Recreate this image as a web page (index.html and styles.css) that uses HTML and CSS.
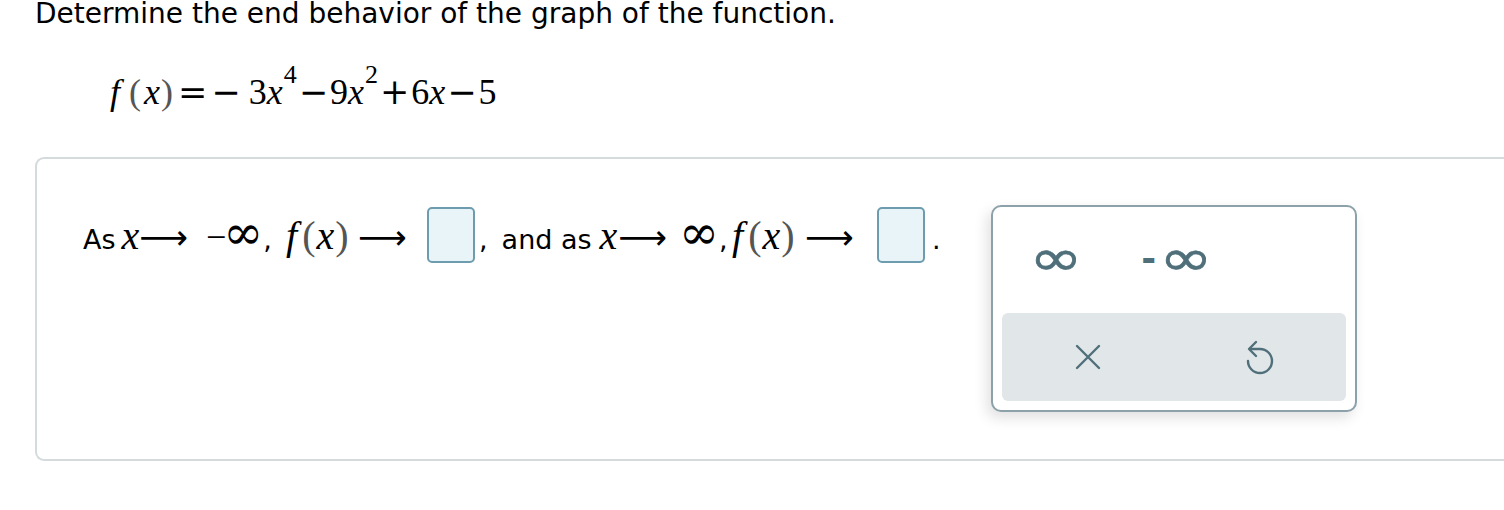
FILE: index.html
```html
<!DOCTYPE html>
<html lang="en">
<head>
<meta charset="utf-8">
<title>End behavior</title>
<link rel="stylesheet" href="styles.css">
</head>
<body>
<main class="page">
  <p class="prompt">Determine the end behavior of the graph of the function.</p>
  <div class="formula">
    <span class="mi f">f</span><span class="paren lp">(</span><span class="mi">x</span><span class="paren rp">)</span><span class="mo eq">=</span><span class="mo neg">−</span><span class="mn">3</span><span class="mi">x</span><sup class="sup">4</sup><span class="mo">−</span><span class="mn">9</span><span class="mi">x</span><sup class="sup">2</sup><span class="mo">+</span><span class="mn">6</span><span class="mi">x</span><span class="mo">−</span><span class="mn">5</span>
  </div>
  <section class="panel">
    <div class="answer-row">
      <span class="seg seg-a"><span class="txt">As</span><span class="mi rx">x</span><span class="arrow">⟶</span></span>
      <span class="seg seg-b"><span class="minus">−</span><span class="inf">∞</span><span class="txt">,</span></span>
      <span class="seg seg-c"><span class="mi rf">f</span><span class="paren rlp">(</span><span class="mi">x</span><span class="paren rrp">)</span></span>
      <span class="seg seg-d"><span class="arrow">⟶</span></span>
      <span class="blank"></span>
      <span class="seg seg-e"><span class="txt comma2">,</span><span class="txt">and as</span><span class="mi rx2">x</span><span class="arrow">⟶</span></span>
      <span class="seg seg-f"><span class="inf">∞</span><span class="txt">,</span></span>
      <span class="seg seg-g"><span class="mi rf">f</span><span class="paren rlp">(</span><span class="mi">x</span><span class="paren rrp">)</span></span>
      <span class="seg seg-h"><span class="arrow">⟶</span></span>
      <span class="blank"></span>
      <span class="txt period">.</span>
    </div>
    <div class="palette">
      <div class="keys">
        <button class="key"><span class="sym">∞</span></button>
        <button class="key"><span class="dash">-</span><span class="sym">∞</span></button>
      </div>
      <div class="tools">
        <button class="tool" aria-label="Clear">
          <svg width="26" height="26" viewBox="0 0 26 26"><path d="M2 2 L24 24 M24 2 L2 24" stroke="#4f6f7a" stroke-width="2.4" stroke-linecap="round" fill="none"/></svg>
        </button>
        <button class="tool" aria-label="Undo">
          <svg width="34" height="38" viewBox="0 0 34 38"><path d="M5 23 A12 12 0 1 0 17 11 H7" stroke="#4f6f7a" stroke-width="2.4" stroke-linecap="round" fill="none"/><path d="M13 4 L6 11 L13 18" stroke="#4f6f7a" stroke-width="2.4" stroke-linecap="round" stroke-linejoin="round" fill="none"/></svg>
        </button>
      </div>
    </div>
  </section>
</main>
</body>
</html>
```

FILE: styles.css
```css
html, body {
  margin: 0;
  padding: 0;
  background: #ffffff;
  overflow: hidden;
}

body {
  font-family: "DejaVu Sans", Verdana, sans-serif;
  color: #000;
}

.page {
  width: 1504px;
  height: 510px;
}

.prompt {
  margin: 0;
  padding: 0 0 0 35px;
  font-size: 28px;
  line-height: 28px;
}

/* ---------- formula ---------- */
.formula {
  margin-top: 44px;
  padding-left: 110px;
  font-family: "Liberation Serif", "Times New Roman", serif;
  font-size: 36px;
  line-height: 40px;
  height: 40px;
  white-space: nowrap;
}

.mi {
  font-family: "Liberation Serif", "Times New Roman", serif;
  font-style: italic;
}

.formula .f { margin-right: 9px; }

.paren {
  font-family: "Liberation Serif", serif;
  color: #555;
}

.formula .lp { margin-right: 3px; }
.formula .rp { margin-left: 1px; }

.mo {
  font-family: "DejaVu Serif", serif;
  font-size: 35px;
  margin: 0 2px;
}

.formula .eq { margin-left: 5px; margin-right: 4px; }
.formula .neg { margin-left: 0; margin-right: 8px; }

.sup {
  font-size: 26px;
  vertical-align: 21px;
  line-height: 0;
  margin-left: 1px;
}

/* ---------- panel ---------- */
.panel {
  box-sizing: border-box;
  margin: 45px 0 0 35px;
  width: 1500px;
  height: 304px;
  border: 2px solid #d5dadd;
  border-right: none;
  border-radius: 9px 0 0 9px;
  display: flex;
  align-items: flex-start;
  padding: 48px 0 0 46px;
}

.answer-row {
  display: flex;
  align-items: baseline;
  width: 908px;
  flex: none;
  white-space: nowrap;
  margin-top: -3px;
}

.answer-row span {
  line-height: 56px;
}

.seg {
  display: flex;
  align-items: baseline;
  flex: none;
}

.seg-a { width: 122px; }
.seg-b { width: 81px; padding-left: 1px; box-sizing: border-box; }
.seg-c { width: 72px; }
.seg-d { width: 69px; }
.seg-e { width: 204px; }
.seg-f { width: 53px; }
.seg-g { width: 73px; }
.seg-h { width: 72px; }

.txt {
  font-family: "DejaVu Sans", Verdana, sans-serif;
  font-size: 27px;
}

.answer-row .mi,
.answer-row .paren {
  font-size: 40px;
}

.rx { margin-left: 6px; margin-right: 0; }
.rx2 { margin-left: 8px; margin-right: 1px; }

.arrow {
  font-family: "DejaVu Sans", sans-serif;
  font-size: 34px;
}

.minus {
  font-family: "Liberation Serif", serif;
  font-size: 36px;
  margin-right: -3px;
}

.inf {
  font-family: "DejaVu Serif", serif;
  font-size: 48px;
}

.rf { margin-right: 5px; }
.rlp { margin-right: 1px; }
.rrp { margin-left: 1px; }

.blank {
  box-sizing: border-box;
  align-self: flex-start;
  flex: none;
  width: 48px;
  height: 56px;
  margin-top: 3px;
  border: 2px solid #6c9cad;
  border-radius: 5px;
  background: #e8f4f8;
}

.comma2 { margin-left: 4px; margin-right: 14px; }

.period { margin-left: 7px; }

/* ---------- palette ---------- */
.palette {
  box-sizing: border-box;
  flex: none;
  width: 366px;
  height: 207px;
  margin-top: -2px;
  border: 2px solid #8ca1aa;
  border-radius: 10px;
  background: #fff;
  box-shadow: -4px 6px 14px rgba(0, 0, 0, 0.12);
  display: flex;
  flex-direction: column;
  padding: 0 9px 9px 9px;
}

.keys {
  display: flex;
  height: 106px;
  margin-left: -5px;
}

.key {
  width: 118px;
  height: 106px;
  border: 0;
  background: transparent;
  font-family: "DejaVu Sans", sans-serif;
  font-size: 50px;
  color: #4f6f7a;
  display: flex;
  align-items: center;
  justify-content: center;
  padding: 0 0 4px 0;
}

.sym {
  display: inline-block;
  transform: scaleX(1.28);
  -webkit-text-stroke: 0.6px #4f6f7a;
}

.dash {
  font-weight: bold;
  font-size: 36px;
  margin-right: 9px;
}

.tools {
  flex: 1;
  display: flex;
  background: #e1e6e9;
  border-radius: 6px;
}

.tool {
  flex: 1;
  border: 0;
  background: transparent;
  display: flex;
  align-items: center;
  justify-content: center;
  padding: 0;
}
```
